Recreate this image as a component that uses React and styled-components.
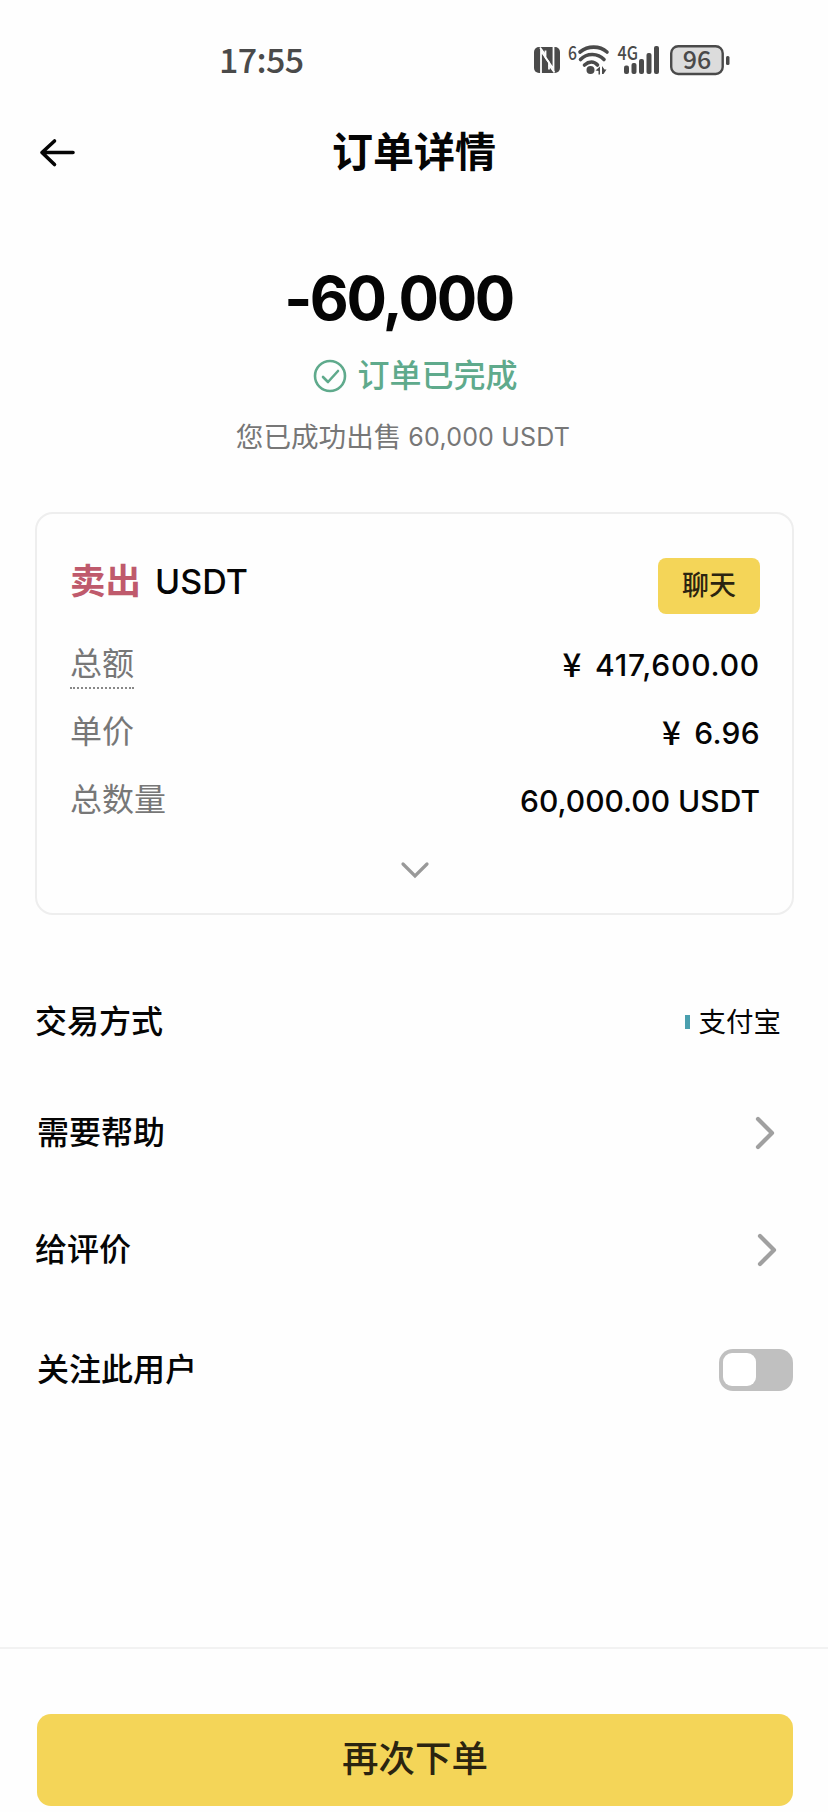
import React from 'react'
import styled, { createGlobalStyle } from 'styled-components';

const GlobalStyle = createGlobalStyle`
    * {
        box-sizing: border-box;
    }

    body {
        margin: 0;
        background-color: #fefefe;
        font-family: Inter, "Noto Sans CJK SC", sans-serif;
        color: #050505;
    }
`;

const Page = styled.div`
    width: 828px;
    height: 1812px;
    display: flex;
    flex-direction: column;
    overflow: hidden;
`;

const StatusBar = styled.div`
    height: 104px;
    padding: 16px 98px 0 219px;
    display: flex;
    justify-content: space-between;
    align-items: center;
    color: #4a4a4a;
`;

const Clock = styled.span`
    padding-bottom: 3px;
    font-family: "Noto Sans CJK SC", sans-serif;
    font-size: 34px;
    line-height: 40px;
    font-weight: 500;
    letter-spacing: -0.6px;
`;

const StatusIcons = styled.svg`
    width: 198px;
    height: 56px;
    display: block;
    font-family: "Noto Sans CJK SC", sans-serif;
`;

const Header = styled.header`
    height: 96px;
    padding: 0 38px;
    display: grid;
    grid-template-columns: 40px 1fr 40px;
    align-items: center;
`;

const BackButton = styled.button`
    width: 40px;
    height: 40px;
    padding: 0;
    border: none;
    background: none;
`;

const Title = styled.h1`
    margin: 0;
    font-size: 41px;
    line-height: 50px;
    font-weight: 700;
    text-align: center;
`;

const Summary = styled.section`
    padding-top: 65px;
    display: flex;
    flex-direction: column;
    align-items: center;
`;

const Amount = styled.div`
    height: 66px;
    padding-right: 31px;
    font-size: 60px;
    line-height: 66px;
    font-weight: 650;
    letter-spacing: -2.4px;
`;

const OrderState = styled.div`
    height: 40px;
    margin-top: 25px;
    padding-left: 3px;
    display: flex;
    align-items: center;
    gap: 10px;
    color: #5faa8c;
    font-size: 32px;
    line-height: 40px;
    font-weight: 500;
`;

const Description = styled.p`
    height: 36px;
    margin: 23px 0 0;
    padding-right: 22px;
    display: flex;
    align-items: center;
    gap: 7px;
    color: #777;
    font-size: 27.6px;
    line-height: 36px;
`;

const Latin = styled.span`
    font-size: ${props => props.size}px;
    letter-spacing: ${props => props.spacing || 0}px;
`;

const Card = styled.section`
    height: 403px;
    margin: 57px 34px 0 35px;
    padding: 44px 32px 0 33px;
    border: 2px solid #eee;
    border-radius: 18px;
`;

const CardHead = styled.div`
    height: 55px;
    display: flex;
    justify-content: space-between;
    align-items: center;
`;

const Pair = styled.div`
    padding-bottom: 8px;
    display: flex;
    align-items: center;
    gap: 14px;
    font-size: 34px;
    line-height: 48px;
    font-weight: 500;
`;

const Side = styled.span`
    color: #bf5a6c;
    font-size: 35.5px;
    font-weight: 700;
`;

const ChatButton = styled.button`
    width: 102px;
    height: 56px;
    padding: 0 0 4px;
    border: none;
    border-radius: 8px;
    background-color: #f4d558;
    color: #2b2410;
    font-family: inherit;
    font-size: 27px;
    font-weight: 500;
`;

const Details = styled.div`
    margin-top: 18px;
`;

const DetailRow = styled.div`
    height: 68px;
    display: flex;
    justify-content: space-between;
    align-items: center;
`;

const DetailLabel = styled.span`
    height: 48px;
    color: #777;
    font-size: 32px;
    line-height: 45px;
    border-bottom: 2px ${props => props.hint ? 'dotted #888' : 'solid transparent'};
`;

const DetailValue = styled.span`
    display: flex;
    align-items: center;
    font-size: 30px;
    line-height: 40px;
    font-weight: 500;
    letter-spacing: ${props => props.spacing || 0}px;
`;

const Currency = styled.span`
    margin-right: 13px;
    padding-bottom: 5px;
    font-family: "Noto Sans CJK SC", sans-serif;
    font-size: 33px;
`;

const Expand = styled.div`
    height: 68px;
    margin-top: 1px;
    display: flex;
    justify-content: center;
    align-items: center;
`;

const Options = styled.section`
    margin-top: 51px;
`;

const OptionRow = styled.div`
    height: ${props => props.height}px;
    padding: 0 ${props => props.end}px 0 ${props => props.start}px;
    display: flex;
    justify-content: space-between;
    align-items: center;
    font-size: 32px;
    line-height: 44px;
    font-weight: 500;
`;

const Method = styled.span`
    display: flex;
    align-items: center;
    gap: 9px;
    font-size: 27.5px;
    font-weight: 400;
`;

const MethodMark = styled.i`
    width: 5px;
    height: 14px;
    background-color: #4a9fae;
`;

const Toggle = styled.span`
    width: 74px;
    height: 42px;
    padding: 4px;
    display: flex;
    align-items: center;
    border-radius: 14px;
    background-color: #c0c0c0;
`;

const Thumb = styled.span`
    width: 33px;
    height: 33px;
    border-radius: 9px;
    background-color: #fff;
`;

const Footer = styled.footer`
    height: 165px;
    margin-top: auto;
    padding: 65px 35px 0 37px;
    border-top: 2px solid #f2f2f2;
`;

const OrderAgain = styled.button`
    width: 100%;
    height: 92px;
    padding: 0 0 8px;
    border: none;
    border-radius: 14px;
    background-color: #f4d558;
    color: #2b2410;
    font-family: inherit;
    font-size: 36.5px;
    font-weight: 500;
`;

const DeviceStatus = () => (
    <StatusIcons viewBox="0 -10 198 56" fill="currentColor">
        {/* nfc */}
        <rect x="2" y="5" width="26" height="26" rx="5" />
        <g fill="none" stroke="#fefefe" strokeWidth="1.800">
            <path d="M9 31V9l8 11.500v7" />
            <path d="M21.500 5v22l-8-11.500V8.500" />
            <path d="M8 5.500l5.500 7.500M17 23l5.500 7.500" />
        </g>
        {/* wifi */}
        <text x="36" y="17.500" fontSize="19" fontWeight="500" textLength="9" lengthAdjust="spacingAndGlyphs">6</text>
        <g fill="none" stroke="currentColor" strokeWidth="3.6" strokeLinecap="round">
            <path d="M48 10c8-6.500 19.500-6.500 27 0" />
            <path d="M48.500 17.500c6.500-7 17.500-6.500 23.500 0" />
            <path d="M52.500 23c4.500-4 9.500-4 13 0" />
        </g>
        <circle cx="58.500" cy="28" r="4" />
        <path d="M63.500 28.500l4.500-4v8h-1.500v-3.500zM70 24v8h1.500l3-4.500h-2z" />
        {/* cellular */}
        <text x="85.500" y="18" fontSize="19" fontWeight="500" textLength="20.500" lengthAdjust="spacingAndGlyphs">4G</text>
        <rect x="92" y="23.500" width="5" height="8.500" rx="2" />
        <rect x="99.500" y="21" width="5" height="11" rx="2" />
        <rect x="107" y="17" width="5" height="15" rx="2" />
        <rect x="114.500" y="11" width="5" height="21" rx="2" />
        <rect x="122" y="4" width="5" height="28" rx="2" />
        {/* battery */}
        <rect x="139.200" y="4.200" width="51.500" height="27.800" rx="7" fill="#dcdcdc" stroke="currentColor" strokeWidth="2.400" />
        <rect x="194" y="14" width="3.500" height="9" rx="1.500" />
        <text x="165" y="27" fontSize="25" fontWeight="500" textAnchor="middle">96</text>
    </StatusIcons>
);

const ArrowLeft = () => (
    <svg width="40" height="40" viewBox="0 0 40 40" fill="none" stroke="#050505" strokeWidth="3.6" strokeLinecap="round" strokeLinejoin="round">
        <path d="M35 20.500H4M16.500 9L4 20.500l12.500 12" />
    </svg>
);

const CheckCircle = () => (
    <svg width="34" height="34" viewBox="0 0 34 34" fill="none" stroke="currentColor" strokeWidth="2.600" strokeLinecap="round" strokeLinejoin="round">
        <circle cx="17" cy="17" r="15" />
        <path d="M10 18l5 5 10-11" />
    </svg>
);

const ChevronDown = () => (
    <svg width="30" height="20" viewBox="0 0 30 20" fill="none" stroke="#999" strokeWidth="3.200" strokeLinecap="round">
        <path d="M3 4l12 12L27 4" />
    </svg>
);

const ChevronRight = () => (
    <svg width="20" height="34" viewBox="0 0 20 34" fill="none" stroke="#a0a0a0" strokeWidth="4.200" strokeLinecap="round" strokeLinejoin="round">
        <path d="M3 3l14 14L3 31" />
    </svg>
);

function App() {
    return (
        <Page>
            <GlobalStyle />
            <StatusBar>
                <Clock>17:55</Clock>
                <DeviceStatus />
            </StatusBar>

            <Header>
                <BackButton><ArrowLeft /></BackButton>
                <Title>订单详情</Title>
            </Header>

            <Summary>
                <Amount>-60,000</Amount>
                <OrderState>
                    <CheckCircle />
                    <span>订单已完成</span>
                </OrderState>
                <Description>
                    <span>您已成功出售</span>
                    <Latin size={25} spacing={0.2}>60,000 USDT</Latin>
                </Description>
            </Summary>

            <Card>
                <CardHead>
                    <Pair>
                        <Side>卖出</Side>
                        <Latin size={34}>USDT</Latin>
                    </Pair>
                    <ChatButton>聊天</ChatButton>
                </CardHead>
                <Details>
                    <DetailRow>
                        <DetailLabel hint>总额</DetailLabel>
                        <DetailValue spacing={0.8}><Currency>¥</Currency><span>417,600.00</span></DetailValue>
                    </DetailRow>
                    <DetailRow>
                        <DetailLabel>单价</DetailLabel>
                        <DetailValue spacing={0.3}><Currency>¥</Currency><span>6.96</span></DetailValue>
                    </DetailRow>
                    <DetailRow>
                        <DetailLabel>总数量</DetailLabel>
                        <DetailValue>60,000.00 USDT</DetailValue>
                    </DetailRow>
                </Details>
                <Expand><ChevronDown /></Expand>
            </Card>

            <Options>
                <OptionRow height={111} start={35} end={47}>
                    <span>交易方式</span>
                    <Method><MethodMark />支付宝</Method>
                </OptionRow>
                <OptionRow height={111} start={37} end={53}>
                    <span>需要帮助</span>
                    <ChevronRight />
                </OptionRow>
                <OptionRow height={123} start={35} end={51}>
                    <span>给评价</span>
                    <ChevronRight />
                </OptionRow>
                <OptionRow height={117} start={37} end={35}>
                    <span>关注此用户</span>
                    <Toggle><Thumb /></Toggle>
                </OptionRow>
            </Options>

            <Footer>
                <OrderAgain>再次下单</OrderAgain>
            </Footer>
        </Page>
    );
}

export default App;
